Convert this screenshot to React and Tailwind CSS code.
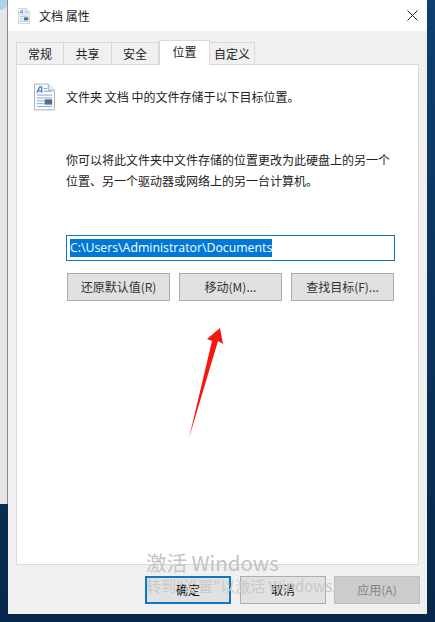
const cjk = { fontFamily: '"Noto Sans CJK SC", "Liberation Sans", sans-serif' };

function DocIcon({ className }) {
  return (
    <svg className={className} viewBox="0 0 22 28" fill="none">
      <path d="M.5.5H15L21.5 7V27.500H.5Z" fill="#fbfcfe" stroke="#a9aeb5" />
      <path d="M15 .5V7H21.500" fill="#e8edf3" stroke="#a9aeb5" />
      <path d="M3 9.500 6 3.500H8V9.500M4.500 7.500H8" stroke="#3f7fd6" strokeWidth="1.400" />
      <path d="M10 5H14M10 8H19M3 12H19M3 15H19M3 18H10M3 21H10M3 24H19" stroke="#7fa8d0" />
      <rect x="11" y="16.500" width="8" height="5.500" fill="#4c6f92" />
    </svg>
  );
}

function Tab({ label, width, active }) {
  if (active) {
    return (
      <div className="z-10 -mb-px flex h-[25px] items-center justify-center self-end border border-b-0 border-[#d9d9d9] bg-white pb-[2px] text-[12px] text-[#222]" style={{ width }}>
        {label}
      </div>
    );
  }
  return (
    <div className="-ml-px flex h-[22px] items-center justify-center self-end border border-b-0 border-[#d9d9d9] bg-[#f0f0f0] text-[12px] text-[#222] first:ml-0" style={{ width }}>
      {label}
    </div>
  );
}

function Btn({ children }) {
  return (
    <div className="flex h-[28px] w-[103px] items-center justify-center border border-[#adadad] bg-[#e1e1e1] text-[12px] text-[#333]">
      {children}
    </div>
  );
}

export default function App() {
  return (
    <div className="relative h-[622px] w-[435px] overflow-hidden bg-gradient-to-b from-[#0e3f70] to-[#06284a]" style={cjk}>
      {/* window behind the dialog, shows as a strip on the left */}
      <div className="absolute left-0 top-0 h-[504px] w-[8px] border-r border-[#8a8a8a] bg-[#e6e6e6]">
        <div className="h-[10px] rounded-br-[8px] bg-[#a9d3e6]" />
      </div>

      <div className="relative mx-2 flex h-[614px] w-[419px] flex-col bg-[#f0f0f0]">
        <div className="flex h-[31px] shrink-0 items-center bg-white pl-[10px] pr-[9px]">
          <DocIcon className="h-[16px] w-[12px]" />
          <span className="ml-[9px] text-[12px] text-[#222]">文档 属性</span>
          <svg className="ml-auto h-[11px] w-[11px]" viewBox="0 0 11 11" stroke="#222" fill="none">
            <path d="M.5.5 10.500 10.500M10.500.5 .5 10.500" />
          </svg>
        </div>

        <div className="ml-[8px] mt-[9px] flex h-[24px] shrink-0 items-end">
          <Tab label="常规" width={48} />
          <Tab label="共享" width={49} />
          <Tab label="安全" width={48} />
          <Tab label="位置" width={51} active />
          <Tab label="自定义" width={46} />
        </div>

        <div className="mx-[8px] h-[501px] shrink-0 border border-[#d9d9d9] bg-white pl-[17px]">
          <div className="mt-[18px] flex items-center">
            <DocIcon className="h-[28px] w-[21px]" />
            <span className="ml-[11px] text-[12px] text-[#222]">文件夹 文档 中的文件存储于以下目标位置。</span>
          </div>
          <p className="ml-[32px] mt-[38px] w-[330px] text-[12px] leading-[21px] text-[#222]">
            你可以将此文件夹中文件存储的位置更改为此硬盘上的另一个<br />位置、另一个驱动器或网络上的另一台计算机。
          </p>
          <div className="ml-[32px] mt-[44px] flex h-[26px] w-[329px] items-center border border-[#0f77c5] bg-white pl-[3px]">
            <span className="bg-[#0078d7] text-[12.3px] leading-[18px] text-white" style={{ fontFamily: '"Open Sans", sans-serif' }}>C:\Users\Administrator\Documents</span>
          </div>
          <div className="ml-[33px] mt-[12px] flex w-[327px] justify-between">
            <Btn>还原默认值(R)</Btn>
            <Btn>移动(M)...</Btn>
            <Btn>查找目标(F)...</Btn>
          </div>
        </div>

        <div className="ml-[137px] mt-[11px] flex">
          <div className="flex h-[28px] w-[86px] items-center justify-center border-2 border-[#0f77c5] bg-[#e1e1e1] text-[12px] text-[#111]">确定</div>
          <div className="ml-[9px] flex h-[28px] w-[86px] items-center justify-center border border-[#adadad] bg-[#e1e1e1] text-[12px] text-[#111]">取消</div>
          <div className="ml-[8px] flex h-[28px] w-[86px] items-center justify-center border border-[#bfbfbf] bg-[#cccccc] text-[12px] text-[#838383]">应用(A)</div>
        </div>
      </div>

      <svg className="absolute left-[185px] top-[325px] h-[115px] w-[45px]" viewBox="0 0 45 115">
        <path d="M4 113 27 16 22 14 35 3 38 19 33 16Z" fill="#f8170c" />
      </svg>

      <div className="pointer-events-none absolute left-[146px] top-[548px] text-[20.500px] leading-[28px] text-[#c3c3c3]">激活 Windows</div>
      <div className="pointer-events-none absolute left-[146px] top-[576px] text-[15px] leading-[20px] text-[#c8c8c8]">转到"设置"以激活 Windows。</div>
    </div>
  );
}
